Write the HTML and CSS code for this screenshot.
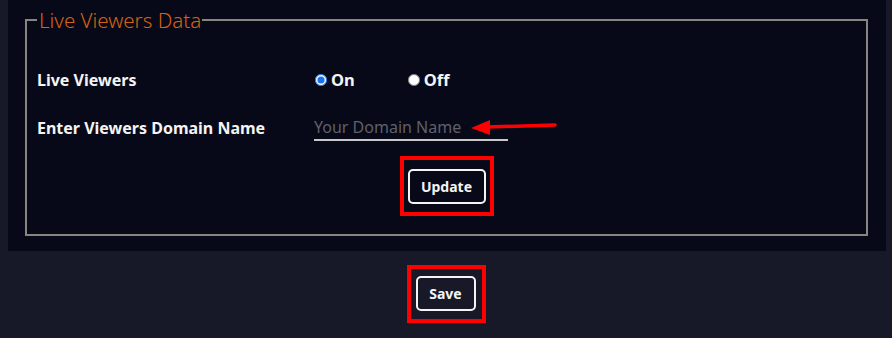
FILE: index.html
```html
<!DOCTYPE html>
<html lang="en">
<head>
    <meta charset="UTF-8">
    <meta name="viewport" content="width=device-width, initial-scale=1.0">
    <title>Live Viewers Data</title>
    <link rel="stylesheet" href="styles.css">
</head>
<body>
    <div class="panel">
        <fieldset class="box">
            <legend>Live Viewers Data</legend>

            <div class="row first">
                <label class="label">Live Viewers</label>
                <div class="radios">
                    <label class="radio"><input type="radio" name="live" checked> On</label>
                    <label class="radio"><input type="radio" name="live"> Off</label>
                </div>
            </div>

            <div class="row second">
                <label class="label" for="domain">Enter Viewers Domain Name</label>
                <div class="field">
                    <input type="text" id="domain" class="domain" placeholder="Your Domain Name">
                    <svg class="arrow" width="90" height="20" viewBox="0 0 90 20">
                        <line x1="16" y1="9" x2="84" y2="7" stroke="#ff0000" stroke-width="3.5" stroke-linecap="round"/>
                        <polygon points="0,10 19,2 19,17" fill="#ff0000"/>
                    </svg>
                </div>
            </div>

            <div class="actions">
                <span class="mark update-mark"><button class="btn update">Update</button></span>
            </div>
        </fieldset>
    </div>

    <div class="actions">
        <span class="mark save-mark"><button class="btn save">Save</button></span>
    </div>
</body>
</html>
```

FILE: styles.css
```css
* {
    box-sizing: border-box;
    font-family: "Noto Sans", "Open Sans", sans-serif;
}
body {
    margin: 0;
    background-color: #171828;
    color: #f4f4f4;
}
.panel {
    margin: 0 6px 0 8px;
    padding: 8px 18px 15px 17px;
    background-color: #070919;
}
.box {
    margin: 0;
    padding: 0 10px 18px 10px;
    border: 2px solid #86867e;
}
legend {
    padding: 0 1px 0 2px;
    color: #d8620f;
    font-size: 20.5px;
    line-height: 24px;
    font-weight: 300;
}
.row {
    display: grid;
    grid-template-columns: 277px auto;
    align-items: center;
}
.row.first {
    margin-top: 36px;
}
.row.second {
    margin-top: 24px;
}
.label {
    font-size: 16px;
    font-weight: 700;
    color: #f4f4f4;
}
.radios {
    display: flex;
    gap: 53px;
    padding-left: 1px;
}
.radio {
    display: flex;
    align-items: center;
    gap: 4px;
    font-size: 16.5px;
    font-weight: 700;
}
.radio input {
    margin: 0;
    width: 12px;
    height: 12px;
    accent-color: #1a73e8;
}
.field {
    position: relative;
}
.domain {
    width: 194px;
    height: 26px;
    padding: 0;
    background: transparent;
    border: none;
    border-bottom: 2px solid #c8c8c8;
    color: #ddd;
    font-size: 16px;
    outline: none;
}
.domain::placeholder {
    color: #5f6068;
}
.arrow {
    position: absolute;
    left: 157px;
    top: 3px;
}
.actions {
    display: flex;
    justify-content: center;
}
.mark {
    display: inline-block;
    border: 4px solid #ff0000;
}
.update-mark {
    margin-top: 15px;
    padding: 9px 4px 8px 4px;
}
.save-mark {
    margin-top: 14px;
    padding: 7px 6px 8px 5px;
}
.btn {
    height: 35px;
    padding: 0;
    background-color: #070919;
    color: #f4f4f4;
    border: 2px solid #f4f4f4;
    border-radius: 5px;
    font-size: 14px;
    font-weight: 700;
    cursor: pointer;
}
.update {
    width: 78px;
}
.save {
    width: 60px;
    background-color: #171828;
}
```
